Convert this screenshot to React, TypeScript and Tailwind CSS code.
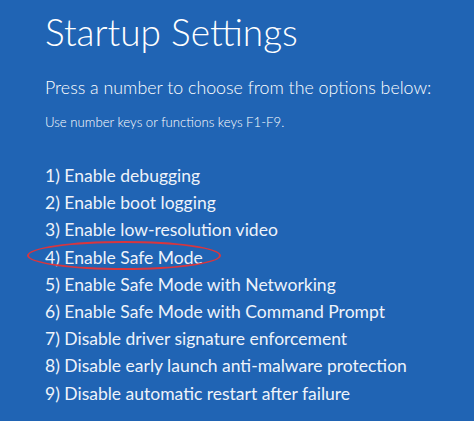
const options = [
  'Enable debugging',
  'Enable boot logging',
  'Enable low-resolution video',
  'Enable Safe Mode',
  'Enable Safe Mode with Networking',
  'Enable Safe Mode with Command Prompt',
  'Disable driver signature enforcement',
  'Disable early launch anti-malware protection',
  'Disable automatic restart after failure',
];

export default function App() {
  return (
    <div
      className="h-[421px] w-[474px] overflow-hidden bg-[#2064b4] pl-[45px] pt-[7px] text-white"
      style={{ fontFamily: 'Lato, "Open Sans", sans-serif' }}
    >
      <h1 className="text-[37px] leading-[50px] font-light">Startup Settings</h1>
      <p className="mt-[18px] text-[17.8px] leading-[24px] font-light">Press a number to choose from the options below:</p>
      <p className="mt-[14px] text-[13.2px] leading-[18px] font-light">Use number keys or functions keys F1-F9.</p>
      <ol className="mt-[31px] text-[17.5px] leading-[27.2px] text-[#eef3fa]">
        {options.map((label, i) => (
          <li key={label} className="relative">
            {i + 1}) {label}
            {i === 3 && (
              <span className="absolute top-[-3px] left-[-18px] h-[29px] w-[194px] rounded-[50%] border-[2.5px] border-[#d9363e]" />
            )}
          </li>
        ))}
      </ol>
    </div>
  );
}
